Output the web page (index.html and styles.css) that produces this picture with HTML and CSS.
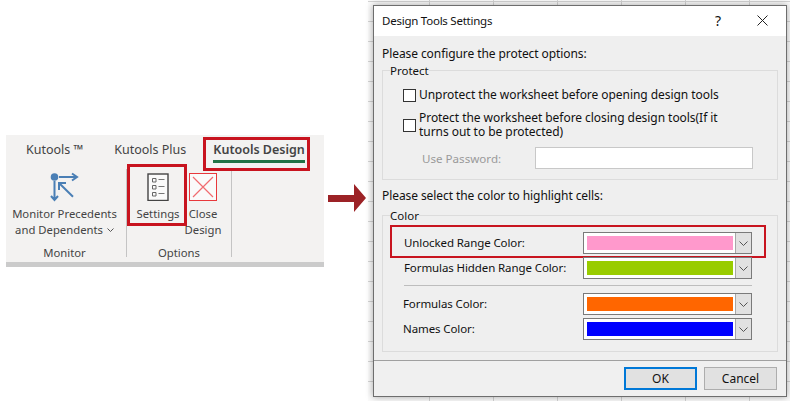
FILE: index.html
```html
<!DOCTYPE html>
<html lang="en">
<head>
<meta charset="utf-8">
<title>Design Tools Settings</title>
<link rel="stylesheet" href="styles.css">
</head>
<body>
<div class="page">
  <section class="left">
    <div class="ribbon">
      <div class="tabs">
        <span class="tab tab-first">Kutools ™</span>
        <span class="tab">Kutools Plus</span>
        <span class="tab tab-active">Kutools Design<i class="mark mark-tab"></i></span>
      </div>
      <div class="groups">
        <div class="group group-monitor">
          <div class="commands">
            <div class="command">
              <svg class="icon icon-monitor" viewBox="0 0 28 28" width="28" height="28" fill="none" stroke="#4a7fb5" stroke-width="2">
                <circle cx="3.5" cy="4" r="3.8" fill="#4a7fb5" stroke="none"/>
                <path d="M8 4H26M21 .5L26 4L21 7.5"/>
                <path d="M3.5 8V27M0 23L3.5 27L7 23"/>
                <path d="M22 23.7L8 10M8 17V10H15"/>
              </svg>
              <span class="cmd-label">Monitor Precedents<br>and Dependents <svg class="caret" viewBox="0 0 7 4" width="7" height="4"><path d="M.5.5L3.5 3.5L6.5.5" fill="none" stroke="#555"/></svg></span>
            </div>
          </div>
          <div class="group-name">Monitor</div>
        </div>
        <div class="group group-options">
          <div class="commands">
            <div class="command command-settings">
              <i class="mark mark-settings"></i>
              <svg class="icon" viewBox="0 0 22 28" width="22" height="28" fill="none">
                <rect x="1" y="1" width="20" height="26.5" fill="#fafafa" stroke="#444" stroke-width="1.4"/>
                <path d="M5.5 5.5h3.5v3.5h-3.5zM5.5 12.5h3.5v3.5h-3.5zM5.5 19.5h3.5v3.5h-3.5z" stroke="#666"/>
                <path d="M11.5 6.5h6M11.5 13.5h6M11.5 20.5h6" stroke="#777"/>
              </svg>
              <span class="cmd-label">Settings</span>
            </div>
            <div class="command command-close">
              <svg class="icon" viewBox="0 0 28 28" width="28" height="28" fill="none">
                <rect x=".5" y=".5" width="27" height="27" fill="#fafafa" stroke="#e8383c"/>
                <path d="M4 4L24 24M24 4L4 24" stroke="#f06c70" stroke-width="1.2"/>
              </svg>
              <span class="cmd-label">Close<br>Design</span>
            </div>
          </div>
          <div class="group-name">Options</div>
        </div>
      </div>
    </div>
    <svg class="arrow" viewBox="0 0 38 28" width="38" height="28"><path d="M0 11H26V0L38 14L26 28V18H0Z" fill="#9c2226"/></svg>
  </section>

  <section class="sheet">
    <div class="dialog">
      <header class="titlebar">
        <span class="title">Design Tools Settings</span>
        <span class="help">?</span>
        <svg class="close-x" viewBox="0 0 11 11" width="11" height="11"><path d="M.5.5L10.5 10.5M10.5.5L.5 10.5" stroke="#222" fill="none"/></svg>
      </header>
      <div class="content">
        <p class="prompt">Please configure the protect options:</p>
        <fieldset class="box box-protect">
          <legend>Protect</legend>
          <div class="box-body">
            <div class="check"><span class="checkbox"></span><span>Unprotect the worksheet before opening design tools</span></div>
            <div class="check check-two"><span class="checkbox"></span><span>Protect the worksheet before closing design tools(If it<br>turns out to be protected)</span></div>
            <div class="password"><span class="password-label">Use Password:</span><span class="input"></span></div>
          </div>
        </fieldset>
        <p class="prompt prompt-second">Please select the color to highlight cells:</p>
        <fieldset class="box box-color">
          <legend>Color</legend>
          <div class="box-body">
            <div class="row">
              <i class="mark mark-row"></i>
              <span class="row-label">Unlocked Range Color:</span>
              <span class="combo"><span class="swatch swatch-pink"></span><span class="drop"><svg viewBox="0 0 9 5" width="9" height="5"><path d="M.5.5L4.5 4.5L8.5.5" fill="none" stroke="#555"/></svg></span></span>
            </div>
            <div class="row">
              <span class="row-label">Formulas Hidden Range Color:</span>
              <span class="combo"><span class="swatch swatch-green"></span><span class="drop"><svg viewBox="0 0 9 5" width="9" height="5"><path d="M.5.5L4.5 4.5L8.5.5" fill="none" stroke="#555"/></svg></span></span>
            </div>
            <hr class="divider">
            <div class="row row-shift">
              <span class="row-label">Formulas Color:</span>
              <span class="combo"><span class="swatch swatch-orange"></span><span class="drop"><svg viewBox="0 0 9 5" width="9" height="5"><path d="M.5.5L4.5 4.5L8.5.5" fill="none" stroke="#555"/></svg></span></span>
            </div>
            <div class="row row-shift">
              <span class="row-label">Names Color:</span>
              <span class="combo"><span class="swatch swatch-blue"></span><span class="drop"><svg viewBox="0 0 9 5" width="9" height="5"><path d="M.5.5L4.5 4.5L8.5.5" fill="none" stroke="#555"/></svg></span></span>
            </div>
          </div>
        </fieldset>
      </div>
      <footer class="footer">
        <span class="btn btn-default">OK</span>
        <span class="btn">Cancel</span>
      </footer>
    </div>
  </section>
</div>
</body>
</html>
```
FILE: styles.css
```css
* { box-sizing: border-box; }
html, body { margin: 0; padding: 0; background: #fff; }
body { font-family: "Noto Sans", "Open Sans", sans-serif; font-size: 12px; color: #1a1a1a; }
.page { display: flex; width: 790px; height: 401px; overflow: hidden; }

/* left: ribbon */
.left { position: relative; width: 368px; flex: none; padding: 135px 0 0 6px; }
.ribbon { width: 318px; height: 132px; background: #f3f2f1; border-bottom: 5px solid #cbcbcb; color: #444; }
.tabs { display: flex; gap: 29px; height: 34px; padding: 7px 0 0 20px; font-size: 12.5px; }
.tab { position: relative; height: 21px; line-height: 16px; white-space: nowrap; }
.tab-first { margin-right: 2px; }
.tab-active { font-weight: 600; border-bottom: 3px solid #217346; padding-bottom: 2px; margin-left: -2px; }
.groups { display: flex; height: 88px; font-size: 11.3px; }
.group { display: flex; flex-direction: column; align-items: center; border-right: 1px solid #c4c4c4; }
.group-monitor { width: 121px; padding-right: 3px; }
.group-options { width: 105px; }
.commands { display: flex; height: 76px; width: 100%; }
.command { position: relative; display: flex; flex-direction: column; align-items: center; gap: 5px; padding-top: 4px; width: 100%; }
.command-settings { width: 62px; flex: none; }
.command-close { width: 28px; flex: none; }
.icon { display: block; flex: none; height: 28px; }
.icon-monitor { overflow: visible; }
.cmd-label { line-height: 16px; text-align: center; white-space: nowrap; }
.caret { vertical-align: 2px; margin-left: 1px; }
.group-name { line-height: 16px; margin-bottom: -4px; }

.mark { position: absolute; border: 3px solid #c8141f; pointer-events: none; }
.mark-tab { left: -10px; top: -5px; width: 107px; height: 34px; }
.mark-settings { left: 0; top: -5px; width: 60px; height: 62px; }
.mark-row { left: -14px; top: -7px; width: 376px; height: 33px; border-width: 2px; }

.arrow { position: absolute; left: 328px; top: 184px; }

/* right: sheet with dialog */
.sheet {
  flex: 1;
  padding: 5px 3px 4px 5px;
  background-color: #fbfbfb;
  background-image: linear-gradient(#d4d4d4 1px, transparent 1px), linear-gradient(90deg, #d4d4d4 1px, transparent 1px);
  background-size: 64px 20px;
  background-position: 61px 1px;
}
.dialog {
  display: flex; flex-direction: column;
  height: 100%;
  background: #efefef;
  border: 1px solid #6e6e6e;
  box-shadow: 0 0 7px rgba(0, 0, 0, .35);
  color: #111;
}
.titlebar { display: flex; align-items: center; height: 30px; padding: 0 0 2px 8px; background: #fff; flex: none; }
.title { flex: 1; font-size: 11.5px; letter-spacing: -.24px; }
.help { width: 42px; font-size: 14px; }
.close-x { margin-right: 18px; }
.content { flex: 1; padding: 10px 8px 0; }
.prompt { margin: 0; line-height: 16px; height: 16px; letter-spacing: -.08px; }
.prompt-second { margin-top: 8px; }
.box { margin: 0; padding: 0; border: 1px solid #dcdcdc; min-width: 0; }
.box legend { padding: 3px 0 1px; margin-left: 7px; line-height: 14px; font-size: 11.5px; }
.box-protect { margin-top: -1px; }
.box-protect .box-body { padding: 8px 24px 10px 20px; }
.box-color { margin-top: 2px; }
.box-color .box-body { padding: 8px 25px 11px 21px; font-size: 11.5px; letter-spacing: -.1px; }
.check { display: flex; align-items: center; gap: 3px; line-height: 16px; white-space: nowrap; letter-spacing: -.05px; }
.check-two { margin-top: 8px; line-height: 14px; }
.checkbox { width: 13px; height: 13px; flex: none; background: #fff; border: 1px solid #333; }
.password { display: flex; align-items: center; margin-top: 8px; height: 22px; padding-left: 19px; color: #9a9a9a; font-size: 11.6px; }
.password-label { width: 113px; flex: none; }
.input { width: 218px; height: 22px; background: #fff; border: 1px solid #c8c8c8; }
.row { position: relative; display: flex; align-items: center; justify-content: space-between; height: 22px; margin-top: 3px; }
.row:first-of-type { margin-top: 0; }
.row-shift .row-label { margin-left: -1px; }
.row-label { white-space: nowrap; padding-bottom: 2px; }
.combo { display: flex; align-items: stretch; width: 169px; height: 22px; padding: 3px 0 3px 3px; background: #fff; border: 1px solid #7a7a7a; }
.swatch { width: 146px; flex: none; }
.swatch-pink { background: #ff99cc; }
.swatch-green { background: #99cc00; }
.swatch-orange { background: #ff6600; }
.swatch-blue { background: #0000ff; }
.drop { display: flex; align-items: center; justify-content: center; flex: 1; margin: -3px 0 -3px 2px; background: #e1e1e1; border-left: 1px solid #a8a8a8; }
.divider { margin: 6px 0 7px; border: 0; border-top: 1px solid #bdbdbd; height: 0; }
.footer { display: flex; justify-content: flex-end; gap: 7px; flex: none; height: 36px; padding: 6px 9px 0 0; background: #f0f0f0; border-top: 1px solid #a0a0a0; }
.btn { width: 73px; height: 23px; display: flex; align-items: center; justify-content: center; background: #e1e1e1; border: 1px solid #adadad; }
.btn-default { border: 2px solid #0078d7; }
```
